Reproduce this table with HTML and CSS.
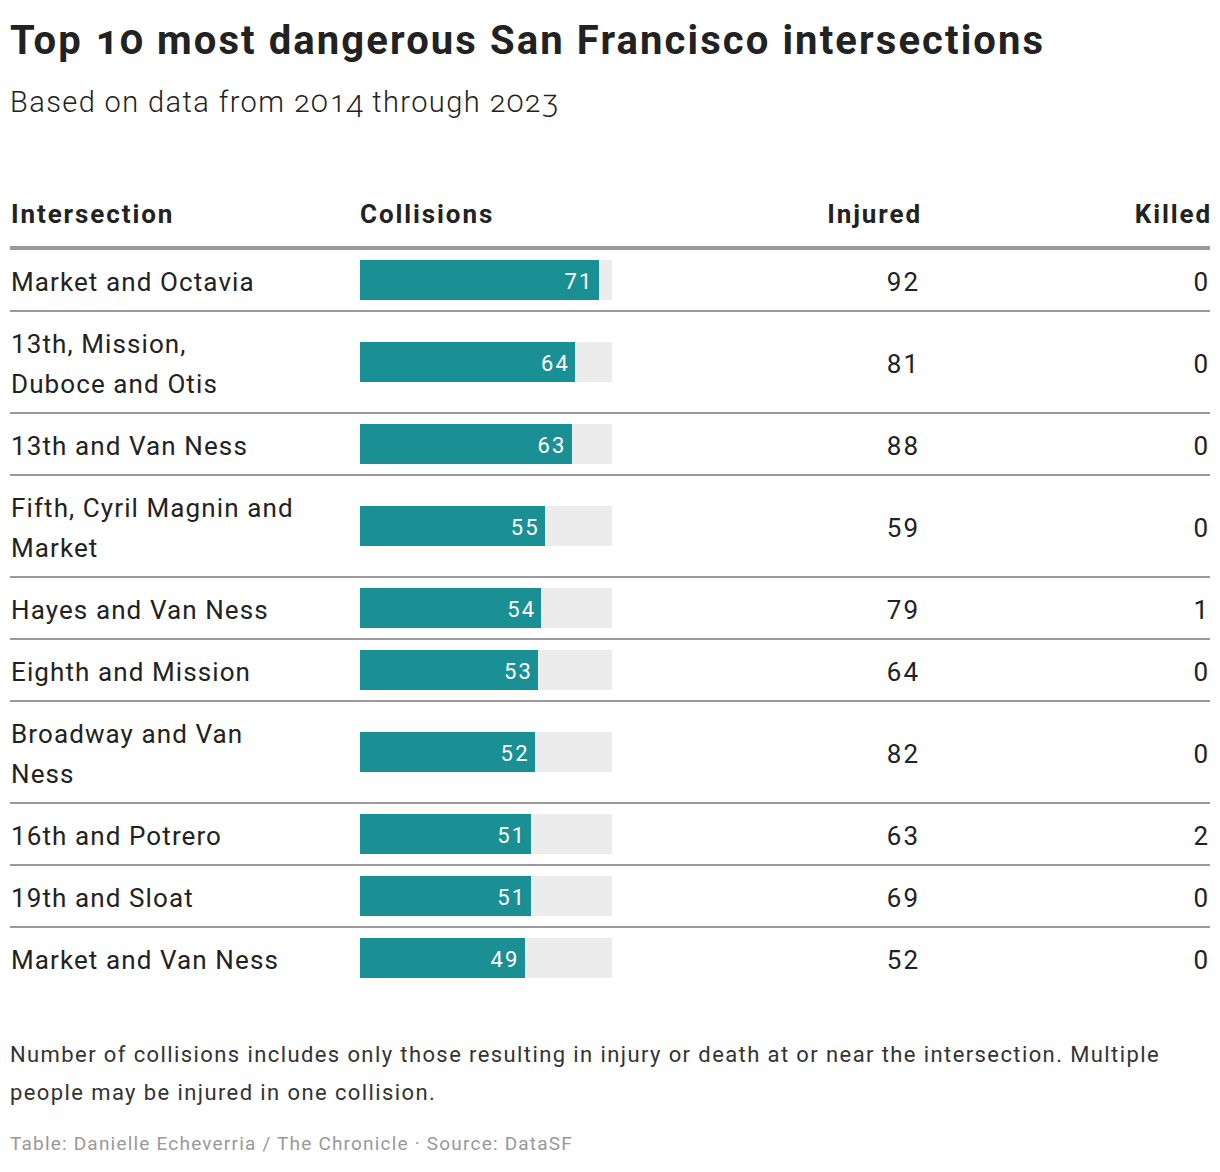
FILE: index.html
```html
<!DOCTYPE html>
<html lang="en">
<head>
<meta charset="utf-8">
<title>Top 10 most dangerous San Francisco intersections</title>
<link rel="stylesheet" href="styles.css">
</head>
<body>
<main class="chart">
  <h1 class="title">Top 10 most dangerous San Francisco intersections</h1>
  <p class="subtitle">Based on data from 2014 through 2023</p>

  <div class="table">
    <div class="row head">
      <div class="cell name">Intersection</div>
      <div class="cell">Collisions</div>
      <div class="cell num">Injured</div>
      <div class="cell num">Killed</div>
    </div>

    <div class="row">
      <div class="cell name">Market and Octavia</div>
      <div class="cell bar"><div class="track"><div class="fill" style="width:94.67%"><span>71</span></div></div></div>
      <div class="cell num">92</div>
      <div class="cell num">0</div>
    </div>
    <div class="row">
      <div class="cell name">13th, Mission,<br>Duboce and Otis</div>
      <div class="cell bar"><div class="track"><div class="fill" style="width:85.33%"><span>64</span></div></div></div>
      <div class="cell num">81</div>
      <div class="cell num">0</div>
    </div>
    <div class="row">
      <div class="cell name">13th and Van Ness</div>
      <div class="cell bar"><div class="track"><div class="fill" style="width:84%"><span>63</span></div></div></div>
      <div class="cell num">88</div>
      <div class="cell num">0</div>
    </div>
    <div class="row">
      <div class="cell name">Fifth, Cyril Magnin and<br>Market</div>
      <div class="cell bar"><div class="track"><div class="fill" style="width:73.33%"><span>55</span></div></div></div>
      <div class="cell num">59</div>
      <div class="cell num">0</div>
    </div>
    <div class="row">
      <div class="cell name">Hayes and Van Ness</div>
      <div class="cell bar"><div class="track"><div class="fill" style="width:72%"><span>54</span></div></div></div>
      <div class="cell num">79</div>
      <div class="cell num">1</div>
    </div>
    <div class="row">
      <div class="cell name">Eighth and Mission</div>
      <div class="cell bar"><div class="track"><div class="fill" style="width:70.67%"><span>53</span></div></div></div>
      <div class="cell num">64</div>
      <div class="cell num">0</div>
    </div>
    <div class="row">
      <div class="cell name">Broadway and Van<br>Ness</div>
      <div class="cell bar"><div class="track"><div class="fill" style="width:69.33%"><span>52</span></div></div></div>
      <div class="cell num">82</div>
      <div class="cell num">0</div>
    </div>
    <div class="row">
      <div class="cell name">16th and Potrero</div>
      <div class="cell bar"><div class="track"><div class="fill" style="width:68%"><span>51</span></div></div></div>
      <div class="cell num">63</div>
      <div class="cell num">2</div>
    </div>
    <div class="row">
      <div class="cell name">19th and Sloat</div>
      <div class="cell bar"><div class="track"><div class="fill" style="width:68%"><span>51</span></div></div></div>
      <div class="cell num">69</div>
      <div class="cell num">0</div>
    </div>
    <div class="row last">
      <div class="cell name">Market and Van Ness</div>
      <div class="cell bar"><div class="track"><div class="fill" style="width:65.33%"><span>49</span></div></div></div>
      <div class="cell num">52</div>
      <div class="cell num">0</div>
    </div>
  </div>

  <p class="note">Number of collisions includes only those resulting in injury or death at or near the intersection. Multiple<br>people may be injured in one collision.</p>
  <p class="source">Table: Danielle Echeverria / The Chronicle · Source: DataSF</p>
</main>
</body>
</html>
```

FILE: styles.css
```css
html, body {
  margin: 0;
  padding: 0;
  background: #ffffff;
}

body {
  font-family: Roboto, "Liberation Sans", sans-serif;
  color: #222222;
}

.chart {
  width: 1200px;
  padding: 17px 10px 0 10px;
}

.title {
  margin: 0;
  font-size: 40px;
  line-height: 48px;
  font-weight: 700;
  letter-spacing: 2.1px;
  color: #222222;
  font-variant-numeric: oldstyle-nums;
}

.subtitle {
  margin: 19px 0 0 0;
  font-size: 29px;
  line-height: 36px;
  font-weight: 300;
  letter-spacing: 1.4px;
  color: #222222;
  font-variant-numeric: oldstyle-nums;
}

.table {
  margin-top: 79px;
}

.row {
  display: grid;
  grid-template-columns: 350px 252px 308px 290px;
  align-items: center;
  border-bottom: 2px solid #9b9b9b;
  font-size: 26px;
  line-height: 40px;
  letter-spacing: 1.1px;
  padding: 12px 0 8px 0;
}

.row.head {
  font-size: 26px;
  font-weight: 700;
  line-height: 30px;
  letter-spacing: 1.9px;
  padding: 0 0 17px 0;
  border-bottom: 4px solid #9b9b9b;
}

.row.last {
  border-bottom: none;
}

.cell.name {
  padding-left: 1px;
}

.cell.bar {
  margin-top: -4px;
}

.cell.num {
  text-align: right;
  letter-spacing: 2px;
  font-variant-numeric: tabular-nums;
}

.row.head .cell.num {
  letter-spacing: 1.9px;
  margin-right: -2px;
}

.track {
  height: 40px;
  background: #ececec;
}

.fill {
  height: 100%;
  background: #1a9095;
  display: flex;
  align-items: center;
  justify-content: flex-end;
  color: #ffffff;
  font-size: 22px;
  letter-spacing: 2.2px;
  font-variant-numeric: tabular-nums;
  padding: 4px 5px 0 0;
  box-sizing: border-box;
}

.note {
  margin: 48px 0 0 0;
  font-size: 22px;
  line-height: 38px;
  letter-spacing: 1.4px;
  color: #333333;
}

.source {
  margin: 19px 0 0 0;
  font-size: 19px;
  line-height: 26px;
  letter-spacing: 1.2px;
  color: #999999;
}
```
